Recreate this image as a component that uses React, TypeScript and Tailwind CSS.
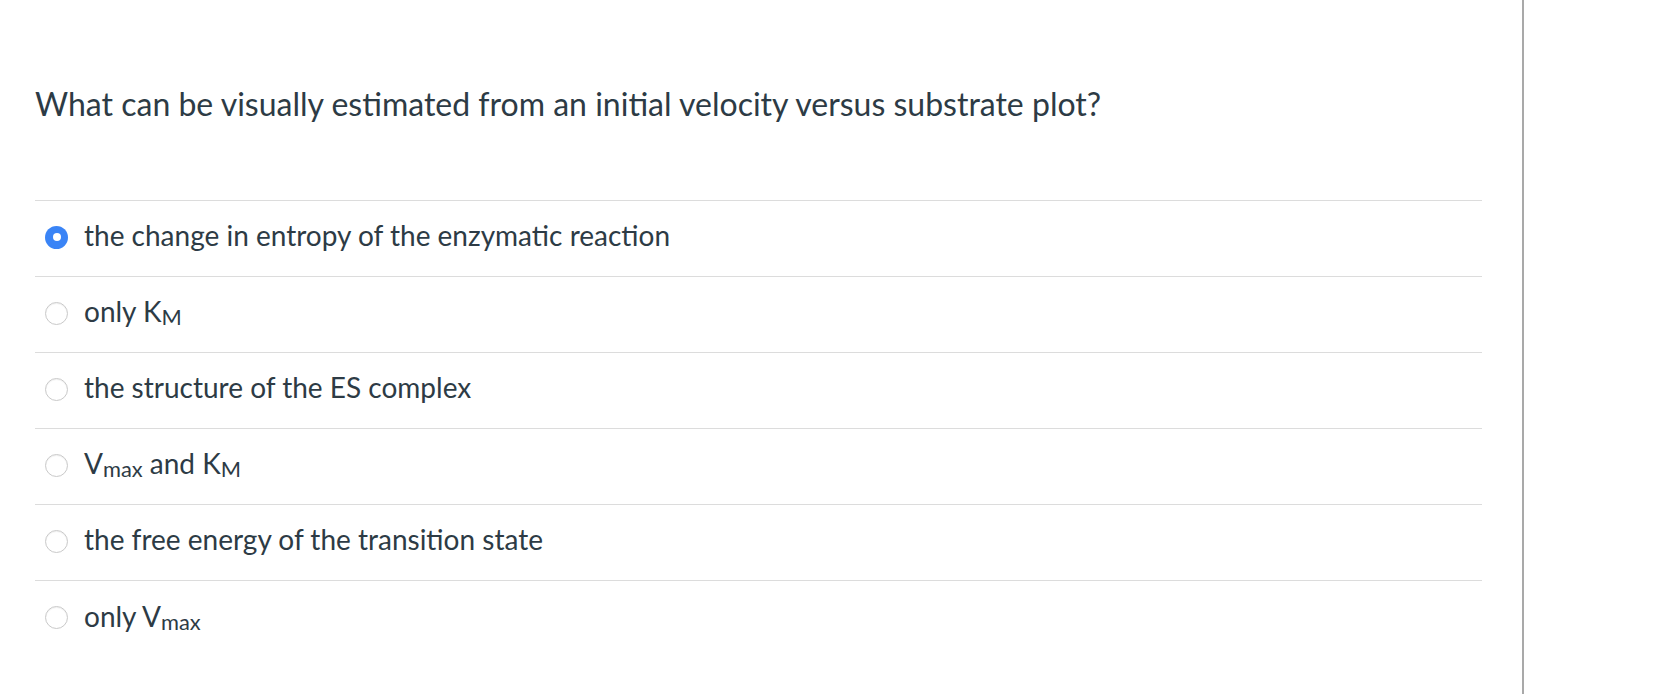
import React, { useState } from 'react';

interface Choice {
  id: string;
  label: React.ReactNode;
}

const Sub = ({ children }: { children: React.ReactNode }) => (
  <sub className="text-[0.78em] relative top-[0.14em] align-baseline leading-none">{children}</sub>
);

const choices: Choice[] = [
  { id: 'a', label: 'the change in entropy of the enzymatic reaction' },
  { id: 'b', label: <>only K<Sub>M</Sub></> },
  { id: 'c', label: 'the structure of the ES complex' },
  { id: 'd', label: <>V<Sub>max</Sub> and K<Sub>M</Sub></> },
  { id: 'e', label: 'the free energy of the transition state' },
  { id: 'f', label: <>only V<Sub>max</Sub></> },
];

function Radio({ checked }: { checked: boolean }) {
  if (checked) {
    return (
      <span className="mb-[3px] flex h-[23px] w-[23px] shrink-0 items-center justify-center rounded-full bg-[#3a84f6]">
        <span className="h-[8px] w-[8px] rounded-full bg-white" />
      </span>
    );
  }
  return (
    <span className="mb-[3px] h-[23px] w-[23px] shrink-0 rounded-full border border-[#c9c9c9] bg-white shadow-[inset_0_1px_1px_rgba(0,0,0,0.06)]" />
  );
}

function App() {
  const [selected, setSelected] = useState('a');

  return (
    <div className="flex h-[694px] w-full bg-white text-[#2d3b45] font-['Lato','Liberation_Sans',sans-serif]">
      <div className="w-[1522px] shrink-0 pl-[35px] pr-[40px]">
        <p className="pt-[84px] text-[32px] leading-[40px]">
          What can be visually estimated from an initial velocity versus substrate plot?
        </p>

        <div className="mt-[76px] border-t border-[#dcdcdc]">
          {choices.map((c) => (
            <label
              key={c.id}
              onClick={() => setSelected(c.id)}
              className="flex h-[76px] cursor-pointer items-center gap-[16px] border-b border-[#dcdcdc] pl-[10px] last:border-b-0"
            >
              <Radio checked={selected === c.id} />
              <span className="pb-[7px] text-[28px] leading-none">{c.label}</span>
            </label>
          ))}
        </div>
      </div>
      <div className="w-[2px] shrink-0 bg-[#a9a9a9]" />
      <div className="flex-1" />
    </div>
  );
}

export default App;
